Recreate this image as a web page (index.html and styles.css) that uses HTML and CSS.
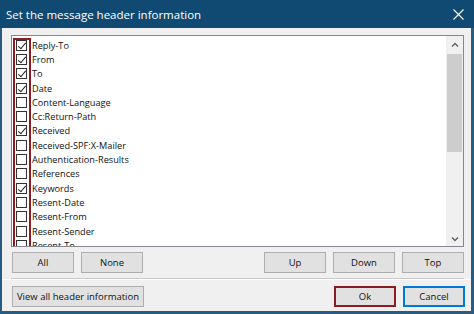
FILE: index.html
```html
<!DOCTYPE html>
<html lang="en">
<head>
    <meta charset="UTF-8">
    <title>Set the message header information</title>
    <link rel="stylesheet" href="styles.css">
</head>
<body>
    <div class="dialog">
        <div class="titlebar">
            <span class="title">Set the message header information</span>
            <svg class="close" width="11" height="11" viewBox="0 0 11 11">
                <path d="M0.5 0.5 L10.5 10.5 M10.5 0.5 L0.5 10.5" stroke="#fff" stroke-width="1.1"/>
            </svg>
        </div>

        <div class="content">
            <div class="listbox">
                <div class="items">
                    <div class="mark"></div>
                    <div class="item"><span class="box checked"></span>Reply-To</div>
                    <div class="item"><span class="box checked"></span>From</div>
                    <div class="item"><span class="box checked"></span>To</div>
                    <div class="item"><span class="box checked"></span>Date</div>
                    <div class="item"><span class="box"></span>Content-Language</div>
                    <div class="item"><span class="box"></span>Cc:Return-Path</div>
                    <div class="item"><span class="box checked"></span>Received</div>
                    <div class="item"><span class="box"></span>Received-SPF:X-Mailer</div>
                    <div class="item"><span class="box"></span>Authentication-Results</div>
                    <div class="item"><span class="box"></span>References</div>
                    <div class="item"><span class="box checked"></span>Keywords</div>
                    <div class="item"><span class="box"></span>Resent-Date</div>
                    <div class="item"><span class="box"></span>Resent-From</div>
                    <div class="item"><span class="box"></span>Resent-Sender</div>
                    <div class="item"><span class="box"></span>Resent-To</div>
                </div>
                <div class="scrollbar">
                    <svg class="arrow" width="16" height="14" viewBox="0 0 16 14">
                        <path d="M5 8.5 L8 5.5 L11 8.5" stroke="#606060" stroke-width="1.4" fill="none"/>
                    </svg>
                    <div class="track"><div class="thumb"></div></div>
                    <svg class="arrow" width="16" height="14" viewBox="0 0 16 14">
                        <path d="M5 5.5 L8 8.5 L11 5.5" stroke="#606060" stroke-width="1.4" fill="none"/>
                    </svg>
                </div>
            </div>

            <div class="row">
                <div class="group">
                    <button class="btn">All</button>
                    <button class="btn">None</button>
                </div>
                <div class="group">
                    <button class="btn">Up</button>
                    <button class="btn">Down</button>
                    <button class="btn">Top</button>
                </div>
            </div>
        </div>

        <div class="footer">
            <button class="btn wide">View all header information</button>
            <div class="group">
                <button class="btn ok">Ok</button>
                <button class="btn cancel">Cancel</button>
            </div>
        </div>
    </div>
</body>
</html>
```
FILE: styles.css
```css
* {
    margin: 0;
    padding: 0;
    box-sizing: border-box;
}

body {
    font-family: 'Open Sans', 'Noto Sans', sans-serif;
    background: #1d4f77;
    width: 474px;
    height: 314px;
    overflow: hidden;
}

.dialog {
    width: 474px;
    height: 314px;
    border: 2px solid #2a5b80;
    border-top: none;
    border-right-width: 3px;
    border-bottom-width: 3px;
    background: #f0f0f0;
    display: flex;
    flex-direction: column;
}

.titlebar {
    height: 28px;
    background: #104a72;
    color: white;
    display: flex;
    align-items: center;
    justify-content: space-between;
    padding: 0 10px 0 6px;
    margin: 0 -3px 0 -2px;
}

.title {
    font-size: 11.5px;
}

.content {
    padding: 7px 7px 0 9px;
}

.listbox {
    height: 212px;
    border: 1px solid #828790;
    background: white;
    display: flex;
    overflow: hidden;
}

.items {
    flex: 1;
    position: relative;
    padding: 2px 0 0 4px;
}

.mark {
    position: absolute;
    left: 1px;
    top: 2px;
    width: 18px;
    height: 212px;
    border: 2px solid #8c1c22;
}

.item {
    height: 14.3px;
    display: flex;
    align-items: center;
    font-size: 9.2px;
    color: #111;
    white-space: nowrap;
}

.box {
    width: 11px;
    height: 11px;
    border: 1px solid #333;
    background: white;
    margin-right: 5px;
    position: relative;
    flex: none;
}

.box.checked::after {
    content: '';
    position: absolute;
    left: 3px;
    top: 0;
    width: 3px;
    height: 7px;
    border: solid #222;
    border-width: 0 1px 1px 0;
    transform: rotate(40deg);
}

.scrollbar {
    width: 17px;
    background: #f0f0f0;
    display: flex;
    flex-direction: column;
}

.arrow {
    display: block;
    margin: 2px auto 0;
}

.track {
    flex: 1;
}

.thumb {
    margin: 2px 1px 0;
    height: 98px;
    background: #cdcdcd;
}

.row {
    display: flex;
    justify-content: space-between;
    padding: 5px 0 0 1px;
    height: 32px;
    border-bottom: 1px solid #c8c8c8;
}

.group {
    display: flex;
    gap: 7px;
}

.btn {
    width: 62px;
    height: 21px;
    font-family: inherit;
    font-size: 9.5px;
    color: #111;
    background: #e1e1e1;
    border: 1px solid #adadad;
}

.footer {
    display: flex;
    justify-content: space-between;
    padding: 6px 6px 0 10px;
    border-top: 1px solid #fff;
}

.wide {
    width: 132px;
}

.ok {
    border: 2px solid #8c1c22;
}

.cancel {
    border: 2px solid #0078d7;
}
```
